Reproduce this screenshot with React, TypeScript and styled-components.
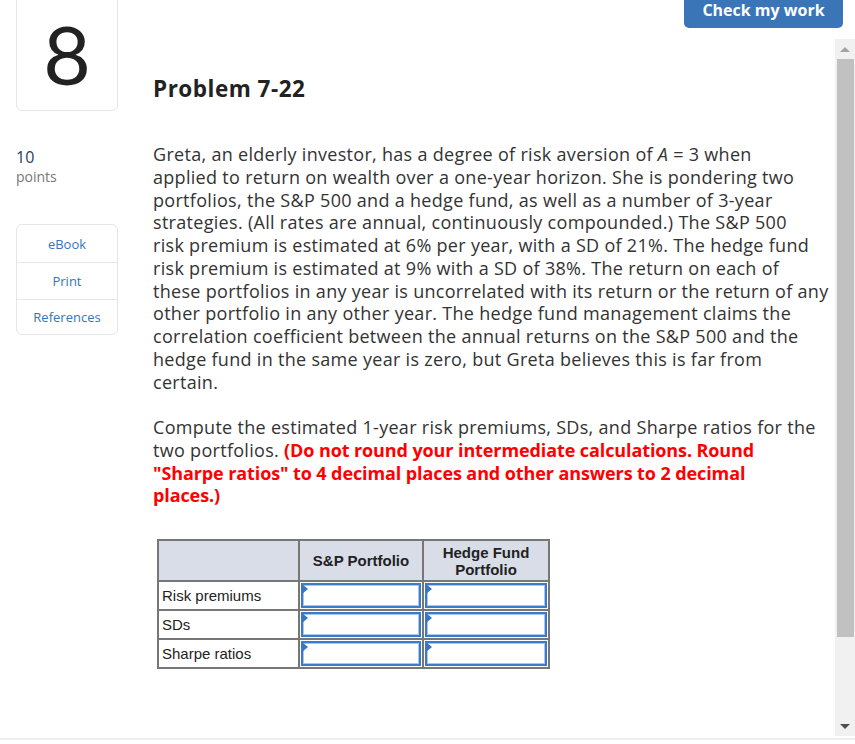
import React from "react";
import styled, { createGlobalStyle } from "styled-components";

const FONT = `"Open Sans", Lato, "Noto Sans", sans-serif`;

const Global = createGlobalStyle`
  html, body { margin: 0; padding: 0; background: #fff; }
  body { font-family: ${FONT}; color: #333; overflow: hidden; }
  * { box-sizing: border-box; }
`;

const Page = styled.div`
  width: 855px;
  height: 744px;
  display: flex;
  flex-direction: column;
  overflow: hidden;
`;

const Body = styled.div`
  flex: 1;
  display: flex;
  min-height: 0;
`;

const BottomRule = styled.div`
  height: 6px;
  border-top: 2px solid #eeeeee;
`;

const Side = styled.aside`
  width: 153px;
  flex: none;
  padding-left: 16px;
  display: flex;
  flex-direction: column;
`;

const NumberCard = styled.div`
  width: 102px;
  height: 121px;
  margin-top: -10px;
  border: 1px solid #e6e6e6;
  border-radius: 6px;
  display: flex;
  align-items: center;
  justify-content: center;
  padding-top: 4px;
  font-family: Lato, sans-serif;
  font-size: 82px;
  font-weight: 400;
  color: #222;
  line-height: 1;
`;

const Points = styled.div`
  margin-top: 36px;
  font-size: 16px;
  color: #1f3d6b;
  line-height: 20px;
`;

const PointsLabel = styled.div`
  font-size: 14px;
  color: #777;
  line-height: 20px;
`;

const LinkBox = styled.div`
  margin-top: 37px;
  width: 102px;
  border: 1px solid #e6e6e6;
  border-radius: 6px;
  display: flex;
  flex-direction: column;
`;

const LinkItem = styled.a<{ $h: number }>`
  height: ${(p) => p.$h}px;
  display: flex;
  align-items: center;
  justify-content: center;
  font-size: 13px;
  color: #3a73b8;
  text-decoration: none;
  & + & { border-top: 1px solid #e6e6e6; }
`;

const Main = styled.main`
  flex: 1;
  min-width: 0;
  display: flex;
  flex-direction: column;
  align-items: flex-start;
`;

const ButtonRow = styled.div`
  align-self: stretch;
  display: flex;
  justify-content: flex-end;
  margin-right: -8px;
`;

const CheckButton = styled.button`
  width: 159px;
  height: 37px;
  margin-top: -9px;
  border: none;
  border-radius: 5px;
  background: #3a75b8;
  color: #fff;
  font-family: ${FONT};
  font-weight: 700;
  font-size: 16px;
  padding: 0;
  line-height: 20px;
  display: flex;
  align-items: center;
  justify-content: center;
  padding-top: 1px;
`;

const Title = styled.h1`
  margin: 48px 0 0;
  font-size: 22.5px;
  letter-spacing: 0.5px;
  font-weight: 700;
  color: #222;
  line-height: 26px;
`;

const Text = styled.div`
  margin: 41px 0 0;
  font-size: 18px;
  letter-spacing: 0.3px;
  line-height: 22.75px;
  color: #333;
  & + & { margin-top: 22.75px; }
`;

const Line = styled.span`
  display: block;
  white-space: nowrap;
`;

const Red = styled.strong`
  color: #ff0000;
  font-weight: 700;
  letter-spacing: -0.1px;
`;

const Grid = styled.table`
  margin: 32px 0 0 4px;
  border-collapse: collapse;
  table-layout: fixed;
  font-family: "Liberation Sans", Arial, sans-serif;
  font-size: 15px;
  color: #222;
`;

const HeadCell = styled.th<{ $w: number }>`
  background: #d8dde7;
  border: 2px solid #777;
  height: 41px;
  font-weight: 700;
  line-height: 17px;
  padding: 0 4px;
  width: ${(p) => p.$w}px;
`;

const LabelCell = styled.td`
  border: 2px solid #777;
  height: 29px;
  padding: 0 3px;
  text-align: left;
`;

const InputCell = styled.td`
  border: 2px solid #777;
  height: 29px;
  padding: 1px;
`;

const Field = styled.div`
  position: relative;
  height: 25px;
  border: 2px solid #3d7bc9;
  box-shadow: inset 0 0 0 1px #a9c6ec;
  background: #fff;
`;

const Flag = styled.span`
  position: absolute;
  left: -1px;
  top: -1px;
  width: 0;
  height: 0;
  border-top: 5px solid transparent;
  border-bottom: 5px solid transparent;
  border-left: 6px solid #3a75c4;
`;

const ScrollTrack = styled.div`
  width: 20px;
  flex: none;
  margin-top: 39px;
  margin-bottom: 2px;
  background: #f1f1f1;
  display: flex;
  flex-direction: column;
  align-items: center;
`;

const Arrow = styled.div<{ $up?: boolean }>`
  height: 20px;
  width: 100%;
  display: flex;
  align-items: center;
  justify-content: center;
  &::before {
    content: "";
    border-left: 5px solid transparent;
    border-right: 5px solid transparent;
    ${(p) => (p.$up ? "border-bottom: 5px solid #a3a3a3;" : "border-top: 5px solid #505050;")}
  }
`;

const Thumb = styled.div`
  width: 17px;
  margin-left: 1px;
  height: 578px;
  background: #c1c1c1;
`;

const Spacer = styled.div`
  flex: 1;
`;

const rows = ["Risk premiums", "SDs", "Sharpe ratios"];

const para1: React.ReactNode[] = [
  <>
    Greta, an elderly investor, has a degree of risk aversion of <i>A</i> = 3 when
  </>,
  "applied to return on wealth over a one-year horizon. She is pondering two",
  "portfolios, the S&P 500 and a hedge fund, as well as a number of 3-year",
  "strategies. (All rates are annual, continuously compounded.) The S&P 500",
  "risk premium is estimated at 6% per year, with a SD of 21%. The hedge fund",
  "risk premium is estimated at 9% with a SD of 38%. The return on each of",
  "these portfolios in any year is uncorrelated with its return or the return of any",
  "other portfolio in any other year. The hedge fund management claims the",
  "correlation coefficient between the annual returns on the S&P 500 and the",
  "hedge fund in the same year is zero, but Greta believes this is far from",
  "certain.",
];

const para2: React.ReactNode[] = [
  "Compute the estimated 1-year risk premiums, SDs, and Sharpe ratios for the",
  <>
    two portfolios. <Red>(Do not round your intermediate calculations. Round</Red>
  </>,
  <Red>"Sharpe ratios" to 4 decimal places and other answers to 2 decimal</Red>,
  <Red>places.)</Red>,
];

export default function App() {
  return (
    <Page>
      <Global />
      <Body>
        <Side>
          <NumberCard>8</NumberCard>
          <Points>10</Points>
          <PointsLabel>points</PointsLabel>
          <LinkBox>
            <LinkItem $h={37}>eBook</LinkItem>
            <LinkItem $h={37}>Print</LinkItem>
            <LinkItem $h={35}>References</LinkItem>
          </LinkBox>
        </Side>
        <Main>
          <ButtonRow>
            <CheckButton>Check my work</CheckButton>
          </ButtonRow>
          <Title>Problem 7-22</Title>
          <Text>
            {para1.map((l, i) => (
              <Line key={i}>{l}</Line>
            ))}
          </Text>
          <Text>
            {para2.map((l, i) => (
              <Line key={i}>{l}</Line>
            ))}
          </Text>
          <Grid>
            <thead>
              <tr>
                <HeadCell $w={141}></HeadCell>
                <HeadCell $w={124}>S&amp;P Portfolio</HeadCell>
                <HeadCell $w={126}>
                  Hedge Fund
                  <br />
                  Portfolio
                </HeadCell>
              </tr>
            </thead>
            <tbody>
              {rows.map((r) => (
                <tr key={r}>
                  <LabelCell>{r}</LabelCell>
                  <InputCell>
                    <Field>
                      <Flag />
                    </Field>
                  </InputCell>
                  <InputCell>
                    <Field>
                      <Flag />
                    </Field>
                  </InputCell>
                </tr>
              ))}
            </tbody>
          </Grid>
        </Main>
        <ScrollTrack>
          <Arrow $up />
          <Thumb />
          <Spacer />
          <Arrow />
        </ScrollTrack>
      </Body>
      <BottomRule />
    </Page>
  );
}
